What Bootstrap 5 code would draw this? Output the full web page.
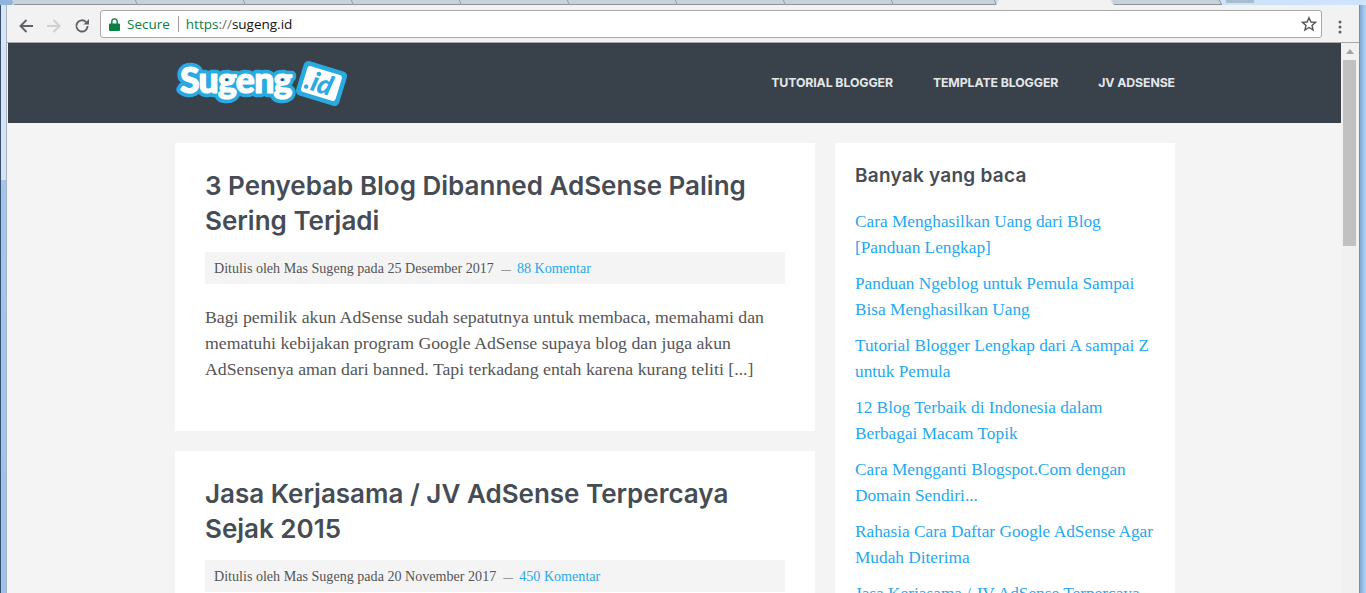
<!DOCTYPE html>
<html lang="en">
<head>
  <meta charset="UTF-8">
  <title>Sugeng.id</title>
  <meta name="viewport" content="width=device-width, initial-scale=1">
  <link href="https://cdn.jsdelivr.net/npm/bootstrap@5.3.0/dist/css/bootstrap.min.css" rel="stylesheet">
  <style>
    html, body { height: 593px; overflow: hidden; }
    body { background: #f4f4f4; font-family: "Liberation Serif", serif; }
    .win-shell { height: 593px; }
    .tab-strip { height: 5px; background: linear-gradient(90deg, #b9d6f2, #cfe4fa); overflow: hidden; }
    .tab-corner { width: 18px; background: #8fb4dc; transform: skewX(-25deg); margin-left: -5px; }
    .tab-chip { width: 108px; background: #c9d1d9; border-right: 1px solid #8f969d; border-bottom: 1px solid #8d9399; transform: skewX(25deg); }
    .tab-first { width: 124px; }
    .tab-last { width: 103px; }
    .tab-active { width: 117px; background: #f2f2f2; border: 0; transform: none; clip-path: polygon(3px 0, calc(100% - 3px) 0, 100% 100%, 0 100%); }
    .tab-new { width: 28px; height: 3px; background: #a9bdd0; margin-left: 5px; }
    .side-left { width: 7px; background: linear-gradient(180deg, #d6e5f7 0 175px, #a3c6ee 175px, #9fc2ea 100%); border-left: 1px solid #39506a; border-right: 1px solid #a9b4c0; }
    .side-right { width: 7px; background: linear-gradient(90deg, #80a9d4, #b5d4f3); border-left: 1px solid #7d8ea0; }
    .tool-bar { height: 38px; background: #f2f2f2; border-bottom: 1px solid #a8a8a8; padding: 5px 10px 0 7px; }
    .tool-btn { width: 24px; height: 24px; }
    .omni-box { height: 28px; width: 1222px; margin-left: 6px; background: #fff; border: 1px solid #a9a9a9; border-radius: 3px; font: 13.5px "Open Sans", sans-serif; }
    .omni-sep { width: 1px; height: 16px; background: #9e9e9e; margin: 0 7px 0 8px; }
    .secure-txt { margin-left: 7px; }
    .secure-txt, .scheme-txt { color: #0b8043; }
    .scheme-dim { color: #6d6d6d; }
    .host-txt { color: #111; }
    .kebab-btn { margin-left: 15px; }
    .scroll-track { width: 18px; background: #f1f1f1; }
    .scroll-thumb { height: 186px; width: 13px; margin: 6px 0 0 2px; background: #c1c1c1; }
    .scroll-up { border-left: 4px solid transparent; border-right: 4px solid transparent; border-bottom: 5px solid #a3a3a3; width: 0; margin: 6px 0 0 5px; }
    .page-view { min-width: 0; overflow: hidden; background: #f4f4f4; border-left: 1px solid #f4f4f4; }
    .site-head { height: 80px; background: #39424a; }
    .site-wrap { width: 1000px; margin-left: 167px; }
    .head-link { font: 700 12.3px Inter, sans-serif; color: #e4e7ea; text-decoration: none; letter-spacing: -.1px; }
    .head-menu { gap: 40px; padding-bottom: 2px; }
    .main-col { width: 640px; }
    .side-col { width: 340px; }
    .post-box { padding: 25px 30px 0; margin-bottom: 20px; height: 288px; border-radius: 0; }
    .post-title { font: 600 26px/35px Inter, sans-serif; color: #464c54; margin: 0 0 14px; }
    .meta-bar { background: #f4f4f4; height: 32px; padding: 0 9px; font-size: 14.1px; color: #555; line-height: 33px; }
    .meta-dash { font-size: 10px; margin: 0 6px 0 7px; }
    .meta-bar a, .pop-list a { color: #25a9ee; text-decoration: none; }
    .post-text { font-size: 17.75px; line-height: 26px; color: #555; margin: 20px 0 0; }
    .side-box { padding: 20px; border-radius: 0; }
    .side-title { font: 600 19px/26px Inter, sans-serif; letter-spacing: .25px; color: #464c54; margin: 0 0 20px; }
    .pop-list { font-size: 17.3px; line-height: 26px; }
    .pop-list li { margin-bottom: 10px; }
  </style>
</head>
<body>
<div class="win-shell d-flex flex-column">
  <div class="tab-strip d-flex flex-shrink-0">
    <div class="tab-corner"></div>
    <div class="tab-chip tab-first"></div>
    <div class="tab-chip"></div><div class="tab-chip"></div><div class="tab-chip"></div>
    <div class="tab-chip"></div><div class="tab-chip"></div><div class="tab-chip"></div><div class="tab-chip"></div>
    <div class="tab-chip tab-last"></div>
    <div class="tab-chip tab-active"></div>
    <div class="tab-chip"></div>
    <div class="tab-new"></div>
  </div>
  <div class="d-flex flex-grow-1" style="min-height:0">
    <div class="side-left flex-shrink-0"></div>
    <div class="flex-grow-1 d-flex flex-column" style="min-width:0">
      <div class="tool-bar d-flex align-items-start flex-shrink-0">
        <div class="tool-btn d-flex align-items-center justify-content-center mt-1">
          <svg width="16" height="16" viewBox="0 0 16 16"><path d="M15 8H2.500M8.500 2 2.500 8l6 6" fill="none" stroke="#5f6368" stroke-width="1.900"/></svg>
        </div>
        <div class="tool-btn d-flex align-items-center justify-content-center mt-1 ms-1">
          <svg width="16" height="16" viewBox="0 0 16 16"><path d="M1 8h12.500M7.500 2l6 6-6 6" fill="none" stroke="#cfcfcf" stroke-width="1.900"/></svg>
        </div>
        <div class="tool-btn d-flex align-items-center justify-content-center mt-1 ms-1">
          <svg width="16" height="16" viewBox="0 0 16 16"><path d="M13.600 8a5.600 5.600 0 1 1-1.600-4" fill="none" stroke="#5f6368" stroke-width="1.900"/><path d="M15 1v5.600H9.400z" fill="#5f6368"/></svg>
        </div>
        <div class="omni-box d-flex align-items-center ps-2">
          <svg width="11" height="13" viewBox="0 0 11 13"><path d="M1 5.500h9a1 1 0 0 1 1 1V12a1 1 0 0 1-1 1H1a1 1 0 0 1-1-1V6.500a1 1 0 0 1 1-1z" fill="#0b8043"/><path d="M2.800 6V3.600a2.700 2.700 0 0 1 5.400 0V6" fill="none" stroke="#0b8043" stroke-width="1.400"/></svg>
          <span class="secure-txt">Secure</span>
          <span class="omni-sep"></span>
          <span class="text-nowrap"><span class="scheme-txt">https</span><span class="scheme-dim">://</span><span class="host-txt">sugeng.id</span></span>
          <svg class="ms-auto me-1" width="16" height="16" viewBox="0 0 16 16"><path d="m8 1.700 1.900 4.300 4.600.4-3.500 3 1.100 4.600L8 11.500l-4.100 2.500L5 9.400l-3.500-3 4.600-.4z" fill="none" stroke="#555" stroke-width="1.400"/></svg>
        </div>
        <div class="kebab-btn mt-1">
          <svg width="6" height="20" viewBox="0 0 6 20"><circle cx="3" cy="5" r="1.500" fill="#5f6368"/><circle cx="3" cy="10" r="1.500" fill="#5f6368"/><circle cx="3" cy="15" r="1.500" fill="#5f6368"/></svg>
        </div>
      </div>
      <div class="d-flex flex-grow-1" style="min-height:0">
        <div class="page-view flex-grow-1">
          <header class="site-head d-flex align-items-center">
            <div class="site-wrap d-flex align-items-center justify-content-between">
              <svg width="176" height="50" viewBox="0 0 176 50">
                <defs>
                  <text id="logo-word" x="5" y="35" font-family="Lato, sans-serif" font-weight="900" font-size="35.500" stroke-linejoin="round" letter-spacing="-.7">Sugeng</text>
                </defs>
                <g transform="rotate(17 146.500 25.500)">
                  <rect x="124" y="7.500" width="45" height="36" rx="5" fill="#29abe2"/>
                  <rect x="128.500" y="12" width="36" height="27" rx="3" fill="#fff"/>
                  <text x="130" y="35" font-family="Lato, sans-serif" font-weight="900" font-style="italic" font-size="27" fill="#29abe2">.id</text>
                </g>
                <use href="#logo-word" fill="#29abe2" stroke="#29abe2" stroke-width="8.500"/>
                <use href="#logo-word" fill="#fff" stroke="#fff" stroke-width="1.200"/>
              </svg>
              <nav class="head-menu nav">
                <a class="head-link" href="#">TUTORIAL BLOGGER</a>
                <a class="head-link" href="#">TEMPLATE BLOGGER</a>
                <a class="head-link" href="#">JV ADSENSE</a>
              </nav>
            </div>
          </header>
          <div class="site-wrap d-flex justify-content-between align-items-start pt-3 mt-1">
            <main class="main-col">
              <article class="post-box card border-0">
                <h2 class="post-title">3 Penyebab Blog Dibanned AdSense Paling Sering Terjadi</h2>
                <div class="meta-bar">Ditulis oleh Mas Sugeng pada 25 Desember 2017<span class="meta-dash">—</span><a href="#">88 Komentar</a></div>
                <p class="post-text">Bagi pemilik akun AdSense sudah sepatutnya untuk membaca, memahami dan mematuhi kebijakan program Google AdSense supaya blog dan juga akun AdSensenya aman dari banned. Tapi terkadang entah karena kurang teliti [...]</p>
              </article>
              <article class="post-box card border-0">
                <h2 class="post-title">Jasa Kerjasama / JV AdSense Terpercaya Sejak 2015</h2>
                <div class="meta-bar">Ditulis oleh Mas Sugeng pada 20 November 2017<span class="meta-dash">—</span><a href="#">450 Komentar</a></div>
              </article>
            </main>
            <aside class="side-col side-box card border-0">
              <h3 class="side-title">Banyak yang baca</h3>
              <ul class="pop-list list-unstyled mb-0">
                <li><a href="#">Cara Menghasilkan Uang dari Blog [Panduan Lengkap]</a></li>
                <li><a href="#">Panduan Ngeblog untuk Pemula Sampai Bisa Menghasilkan Uang</a></li>
                <li><a href="#">Tutorial Blogger Lengkap dari A sampai Z untuk Pemula</a></li>
                <li><a href="#">12 Blog Terbaik di Indonesia dalam Berbagai Macam Topik</a></li>
                <li><a href="#">Cara Mengganti Blogspot.Com dengan Domain Sendiri...</a></li>
                <li><a href="#">Rahasia Cara Daftar Google AdSense Agar Mudah Diterima</a></li>
                <li><a href="#">Jasa Kerjasama / JV AdSense Terpercaya Sejak 2015</a></li>
              </ul>
            </aside>
          </div>
        </div>
        <div class="scroll-track flex-shrink-0">
          <div class="scroll-up"></div>
          <div class="scroll-thumb"></div>
        </div>
      </div>
    </div>
    <div class="side-right flex-shrink-0"></div>
  </div>
</div>
<script src="https://cdn.jsdelivr.net/npm/bootstrap@5.3.0/dist/js/bootstrap.bundle.min.js"></script>
</body>
</html>
